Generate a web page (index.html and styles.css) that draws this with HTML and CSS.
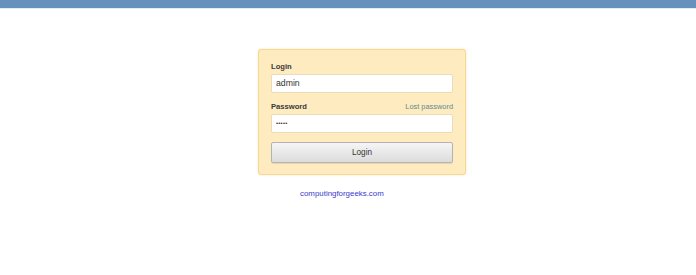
FILE: index.html
```html
<!DOCTYPE html>
<html>
<head>
<meta charset="utf-8">
<link rel="stylesheet" href="styles.css">
</head>
<body>
<div class="topbar"></div>
<div class="main">
  <div class="wrap">
    <form class="box">
      <div class="label-row"><span class="label">Login</span></div>
      <div class="input">admin</div>
      <div class="label-row"><span class="label">Password</span><a class="lost" href="#">Lost password</a></div>
      <div class="input pw">•••••</div>
      <div class="btn">Login</div>
    </form>
    <a class="site" href="#">computingforgeeks.com</a>
  </div>
</div>
</body>
</html>
```
FILE: styles.css
```css
html, body { margin: 0; padding: 0; background: #fff; }
body { font-family: "Liberation Sans", Arial, sans-serif; font-size: 8px; color: #333; }
.topbar { height: 8px; background: #6591bc; border-bottom: 1px solid #dfeef5; }
.main { display: flex; justify-content: center; padding-left: 28px; padding-top: 40px; }
.wrap { width: 208px; display: flex; flex-direction: column; }
.box {
  width: 182px;
  background: #feebc0; border: 1px solid #f6d98f; border-radius: 3px;
  padding: 10px 12px 11px 12px;
  box-shadow: 0 0 2px rgba(240,210,140,0.6);
  display: flex; flex-direction: column;
}
.label-row { display: flex; justify-content: space-between; align-items: baseline; height: 12px; padding-top: 2px; box-sizing: border-box; margin-bottom: 2px; }
.label { font-weight: bold; font-size: 7.6px; color: #3a3a3a; }
.lost { color: #5e8c8f; text-decoration: none; font-size: 7.4px; }
.input {
  height: 17px; background: #fff; border: 1px solid #eadcb8; border-radius: 2px;
  padding: 0 4px; line-height: 17px; font-size: 8.7px; color: #333; margin-bottom: 7px;
}
.input.pw { font-size: 6px; letter-spacing: 0.2px; margin-bottom: 9px; }
.btn {
  height: 19px; line-height: 19px; text-align: center;
  border: 1px solid #b4b4b4; border-radius: 2px;
  background: linear-gradient(#f5f5f5, #dcdcdc);
  font-size: 8.2px; color: #333;
  box-shadow: 0 1px 1px rgba(0,0,0,0.1);
}
.site { margin-top: 14px; margin-left: 42px; align-self: flex-start; color: #3a3acc; text-decoration: none; font-size: 7.9px; }
```
